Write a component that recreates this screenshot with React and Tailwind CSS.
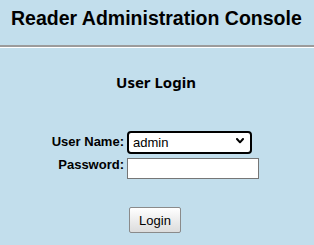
export default function App() {
  return (
    <div className="min-h-screen w-full bg-[#c2deec] text-black font-['Liberation_Sans',Arial,sans-serif]">
      {/* Header */}
      <div className="pt-[7px] pl-[11px] h-[45px]">
        <h2 className="text-[19.5px] leading-[22px] font-bold">Reader Administration Console</h2>
      </div>
      <div className="h-[2px] bg-[#9b9b9b]" />
      <div className="h-px bg-white" />

      {/* Login form */}
      <div className="pt-[24px]">
        <h3 className="text-center pr-[2px] text-[15px] leading-[20px] font-bold font-['Noto_Sans',sans-serif]">
          User Login
        </h3>

        <div className="mt-[38px] flex flex-col gap-[5px]">
          <div className="flex items-start">
            <label className="w-[84px] ml-[40px] mt-[4px] text-right text-[13px] leading-[15px] font-bold">User Name:</label>
            <div className="relative ml-[3px] w-[125px] h-[23px]">
              <select
                defaultValue="admin"
                className="appearance-none w-full h-full bg-white border-2 border-black rounded-[4px] pl-[4px] text-[13px] leading-[17px] outline-none"
              >
                <option value="admin">admin</option>
                <option value="user">user</option>
              </select>
              <svg
                className="absolute right-[8px] top-[8px] pointer-events-none"
                width="8"
                height="6"
                viewBox="0 0 8 6"
                fill="none"
              >
                <path d="M1 1 L4 4.3 L7 1" stroke="black" strokeWidth="2" strokeLinecap="round" strokeLinejoin="round" />
              </svg>
            </div>
          </div>
          <div className="flex items-start">
            <label className="w-[84px] ml-[40px] -mt-px text-right text-[13px] leading-[15px] font-bold">Password:</label>
            <input
              type="password"
              className="ml-[3px] w-[132px] h-[21px] bg-white border border-[#767676] outline-none"
            />
          </div>
        </div>

        <div className="mt-[28px] pl-[129px]">
          <button className="w-[52px] h-[26px] rounded-[2px] border border-[#8a8a8a] bg-gradient-to-b from-white to-[#dcdcdc] text-[13px] leading-[15px]">
            Login
          </button>
        </div>
      </div>
    </div>
  );
}
